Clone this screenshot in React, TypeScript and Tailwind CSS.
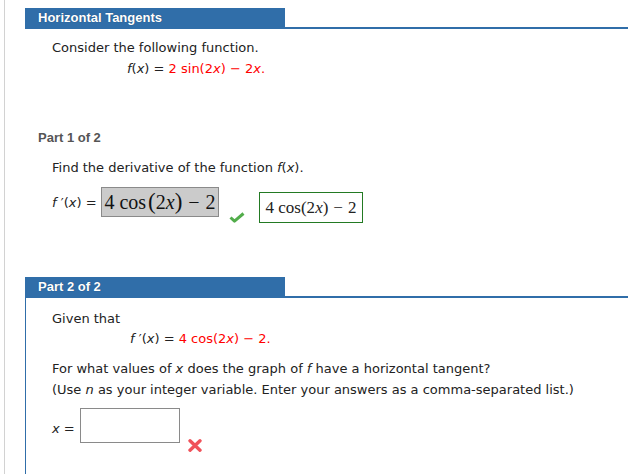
import React from 'react';

const BLUE = 'bg-[#306ea9]';

const SectionHeader: React.FC<{ title: string }> = ({ title }) => (
  <div className="border-b-2 border-[#306ea9]">
    <div
      className={`${BLUE} w-[260px] h-[19px] pl-[13px] text-white font-bold text-[13px] leading-[20px] [font-family:'Liberation_Sans',Arial,sans-serif] [text-shadow:0_0_1px_#1c426b]`}
    >
      {title}
    </div>
  </div>
);

const CheckIcon = () => (
  <svg width="16" height="11" viewBox="0 0 16 11">
    <path d="M1.5 5.5 L5.5 9.2 L14.5 1.5" fill="none" stroke="#52ad4b" strokeWidth="3" strokeLinejoin="round" />
  </svg>
);

const CrossIcon = () => (
  <svg width="14" height="13" viewBox="0 0 14 13">
    <path d="M2 1.8 L12 11.2 M12 1.8 L2 11.2" stroke="#f0525a" strokeWidth="3.4" strokeLinecap="round" />
  </svg>
);

const App: React.FC = () => {
  return (
    <div className="w-[628px] h-[474px] overflow-hidden bg-white pl-[4px] text-[13px] leading-[16px] text-[#222] [font-family:'DejaVu_Sans',Verdana,sans-serif]">
      <div className="h-full border-l border-[#d2d2d2] pl-[20px] pt-[8px] flex flex-col">
        <SectionHeader title="Horizontal Tangents" />

        <div className="pl-[27px]">
          <p className="mt-[11px]">Consider the following function.</p>
          <p className="mt-[5px] ml-[75px]">
            <i>f</i>(<i>x</i>) = <span className="text-[#ff0000]">2 sin(2<i>x</i>) − 2<i>x</i>.</span>
          </p>
        </div>

        <p className="mt-[53px] pl-[13px] font-bold text-[#555] [font-family:'Liberation_Sans',Arial,sans-serif]">Part 1 of 2</p>

        <div className="pl-[27px]">
          <p className="mt-[14px]">
            Find the derivative of the function <i>f</i>(<i>x</i>).
          </p>
          <div className="mt-[11px] flex items-start">
            <span className="w-[49px] mt-[8px] whitespace-nowrap">
              <i>f</i> ′(<i>x</i>) =
            </span>
            <div className="w-[118px] h-[30px] border border-[#8a8a8a] bg-[#cbcbcb] flex items-center justify-center text-[20px] leading-[24px] text-[#111] [font-family:'Liberation_Serif','Times_New_Roman',serif]">
              4 cos<span className="text-[23px] ml-[2px]">(</span>2<i>x</i><span className="text-[23px]">)</span>
              <span className="mx-[6px]">−</span>2
            </div>
            <span className="ml-[10px] mt-[25px]">
              <CheckIcon />
            </span>
            <div className="ml-[14px] mt-[5px] w-[104px] h-[31px] border border-[#237a23] flex items-center justify-center text-[17px] leading-[20px] text-[#222] [font-family:'Liberation_Serif','Times_New_Roman',serif]">
              4 cos(2<i>x</i>)<span className="mx-[5px]">−</span>2
            </div>
          </div>
        </div>

        <div className="mt-[54px] flex-1 border-l border-[#306ea9]">
          <div className="-ml-px">
            <SectionHeader title="Part 2 of 2" />
          </div>
          <div className="pl-[26px]">
            <p className="mt-[13px]">Given that</p>
            <p className="mt-[4px] ml-[78px]">
              <i>f</i> ′(<i>x</i>) = <span className="text-[#ff0000]">4 cos(2<i>x</i>) − 2.</span>
            </p>
            <p className="mt-[14px]">
              For what values of <i>x</i> does the graph of <i>f</i> have a horizontal tangent?
            </p>
            <p className="mt-[5px]">
              (Use <i>n</i> as your integer variable. Enter your answers as a comma-separated list.)
            </p>
            <div className="mt-[10px] flex items-start">
              <span className="w-[28px] mt-[13px]">
                <i>x</i> =
              </span>
              <input
                type="text"
                className="w-[100px] h-[35px] border border-[#8a8a8a] bg-white outline-none"
              />
              <span className="ml-[8px] mt-[31px]">
                <CrossIcon />
              </span>
            </div>
          </div>
        </div>
      </div>
    </div>
  );
};

export default App;
